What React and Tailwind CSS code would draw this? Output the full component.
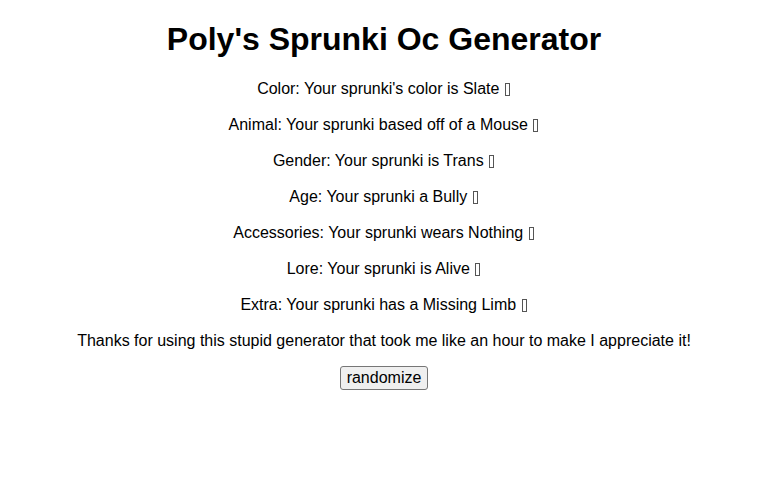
import React, { useState } from 'react';

const lines = [
    'Color: Your sprunki\'s color is Slate',
    'Animal: Your sprunki based off of a Mouse',
    'Gender: Your sprunki is Trans',
    'Age: Your sprunki a Bully',
    'Accessories: Your sprunki wears Nothing',
    'Lore: Your sprunki is Alive',
    'Extra: Your sprunki has a Missing Limb',
];

// missing-glyph box, like the emoji that failed to render
const Tofu = () => (
    <span className="inline-block w-[5px] h-[13px] ml-[1px] mr-[1px] border border-[#555] align-[-2px]"></span>
);

const App = () => {
    const [items] = useState(lines);

    return (
        <div className="flex flex-col items-center bg-white text-black min-h-screen" style={{ fontFamily: '"Liberation Sans", Arial, sans-serif' }}>
            <h1 className="mt-[21px] text-[32px] leading-[37px] font-bold">Poly's Sprunki Oc Generator</h1>
            <div className="mt-[21px] flex flex-col items-center gap-4">
                {items.map((line, i) => (
                    <p key={i} className="text-base leading-5">{line} <Tofu /></p>
                ))}
                <p className="text-base leading-5">Thanks for using this stupid generator that took me like an hour to make I appreciate it!</p>
            </div>
            <button className="mt-[15px] h-[24px] px-[6px] text-base leading-5 bg-[#efefef] border border-[#767676] rounded-[3px]">
                randomize
            </button>
        </div>
    );
};

export default App;
